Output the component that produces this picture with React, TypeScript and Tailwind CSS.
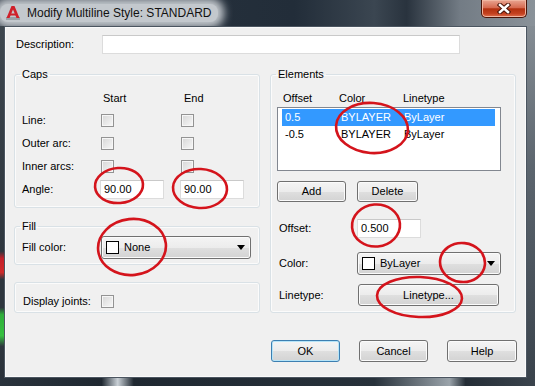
import React from "react";

// Windows 7 style "Modify Multiline Style" dialog with red annotation circles

const btnBg =
  "bg-[linear-gradient(#f4f4f4_0%,#ececec_50%,#dfdfdf_51%,#d3d3d3_100%)]";

const Checkbox = () => (
  <div className="size-[13px] border border-[#939393] bg-[linear-gradient(135deg,#d6d6d6,#f8f8f8)] shadow-[inset_0_0_0_1px_#f6f6f6]" />
);

const TextBox = ({ value, className }: { value?: string; className: string }) => (
  <div
    className={`${className} flex items-center border border-[#dcdcdc] border-t-[#c9c9c9] bg-white pl-[3px] leading-none`}
  >
    {value}
  </div>
);

const Button = ({
  label,
  className,
  focus,
}: {
  label: string;
  className: string;
  focus?: boolean;
}) => (
  <div
    className={`${className} ${btnBg} flex items-center justify-center rounded-[3px] border ${
      focus
        ? "border-[#3c7fb1] shadow-[inset_0_0_0_1px_#b6e4f8]"
        : "border-[#707070] shadow-[inset_0_0_0_1px_#fbfbfb]"
    }`}
  >
    {label}
  </div>
);

const ColorCombo = ({ label, className }: { label: string; className: string }) => (
  <div
    className={`${className} ${btnBg} flex items-center rounded-[3px] border border-[#707070] shadow-[inset_0_0_0_1px_#fbfbfb] pl-[4px] pr-[5px]`}
  >
    <div className="size-[13px] border border-black bg-white" />
    <span className="ml-[5px] flex-1">{label}</span>
    <svg width="8" height="5" viewBox="0 0 8 5">
      <path d="M0 0 H8 L4 5 Z" fill="#000" />
    </svg>
  </div>
);

const GroupBox = ({
  title,
  className,
  children,
}: {
  title: string;
  className?: string;
  children: React.ReactNode;
}) => (
  <fieldset className={`${className ?? ""} rounded-[3px] border border-[#d9e1e6] shadow-[inset_0_0_0_1px_#fbfbfb]`}>
    <legend className="ml-[5px] px-[2px] leading-[14px]">{title}</legend>
    {children}
  </fieldset>
);

const TitleBar = () => (
  <div className="flex h-[26px] items-start justify-between bg-[linear-gradient(90deg,#2a3440_0%,#222d39_55%,#3b4651_70%,#29333e_76%,#737c85_86%,#8a9299_100%)]">
    <div className="mt-[4px] flex h-[18px] items-center gap-[6px] rounded-[8px] bg-[#c3c8cd] pl-[5px] pr-[6px] shadow-[0_0_8px_6px_#c3c8cd]">
      <svg width="16" height="16" viewBox="0 0 16 16">
        <rect x="1" y="12" width="14" height="3" fill="#9aa0a6" />
        <path d="M1.5 13 L6.5 1 H9.5 L14.5 13 H11.5 L8 4.5 L4.5 13 Z" fill="#d0202a" />
        <rect x="5" y="8.5" width="6" height="2" fill="#d0202a" />
      </svg>
      <span className="text-[12px] text-[#111]">Modify Multiline Style: STANDARD</span>
    </div>
    <div className="mr-[8px] flex h-[18px] w-[46px] items-center justify-center rounded-b-[5px] border border-t-0 border-[#4a1408] bg-[linear-gradient(#e9a591_0%,#d66a50_45%,#b2300f_52%,#c4411f_80%,#e07050_100%)] shadow-[inset_0_0_0_1px_#f0b5a0]">
      <svg width="14" height="11" viewBox="0 0 14 11">
        <path d="M3 2 L11 9 M11 2 L3 9" stroke="#4a1408" strokeWidth="4.5" strokeLinecap="square" />
        <path d="M3 2 L11 9 M11 2 L3 9" stroke="#ffffff" strokeWidth="2.5" strokeLinecap="square" />
      </svg>
    </div>
  </div>
);

const Caps = () => {
  const rows = ["Line:", "Outer arc:", "Inner arcs:"];
  return (
    <GroupBox title="Caps">
      <div className="pl-[7px] pt-[6px] pb-[7px]">
        <div className="grid h-[22px] grid-cols-[78px_80px_79px] items-center">
          <span />
          <span className="ml-[3px]">Start</span>
          <span className="ml-[4px]">End</span>
        </div>
        {rows.map((r) => (
          <div key={r} className="grid h-[23px] grid-cols-[78px_80px_79px] items-center">
            <span>{r}</span>
            <div className="ml-[1px]">
              <Checkbox />
            </div>
            <div className="ml-[1px]">
              <Checkbox />
            </div>
          </div>
        ))}
        <div className="grid h-[22px] grid-cols-[78px_80px_79px] items-center">
          <span>Angle:</span>
          <TextBox value="90.00" className="h-[19px] w-[64px]" />
          <TextBox value="90.00" className="h-[19px] w-[64px]" />
        </div>
      </div>
    </GroupBox>
  );
};

const Elements = () => (
  <GroupBox title="Elements">
    <div className="pl-[6px] pb-[6px]">
      <div className="mt-[8px] flex h-[18px] items-center pl-[6px]">
        <span className="w-[56px]">Offset</span>
        <span className="w-[64px]">Color</span>
        <span>Linetype</span>
      </div>
      <div className="h-[64px] w-[224px] border border-[#828790] bg-white pt-[1px]">
        <div className="ml-[4px] mr-[5px] flex h-[17px] items-center bg-[#3399ff] pl-[3px] text-white">
          <span className="w-[56px]">0.5</span>
          <span className="w-[63px]">BYLAYER</span>
          <span>ByLayer</span>
        </div>
        <div className="ml-[4px] mr-[5px] flex h-[17px] items-center pl-[3px]">
          <span className="w-[56px]">-0.5</span>
          <span className="w-[63px]">BYLAYER</span>
          <span>ByLayer</span>
        </div>
      </div>
      <div className="mt-[10px] flex">
        <Button label="Add" className="h-[21px] w-[69px]" />
        <Button label="Delete" className="ml-[11px] h-[21px] w-[61px]" />
      </div>
      <div className="mt-[17px] flex h-[19px] items-center pl-[2px]">
        <span className="w-[78px]">Offset:</span>
        <TextBox value="0.500" className="h-[19px] w-[64px]" />
      </div>
      <div className="mt-[14px] flex h-[23px] items-center pl-[2px]">
        <span className="w-[78px]">Color:</span>
        <ColorCombo label="ByLayer" className="h-[23px] w-[144px]" />
      </div>
      <div className="mt-[9px] flex h-[22px] items-center pl-[2px]">
        <span className="w-[79px]">Linetype:</span>
        <Button label="Linetype..." className="h-[22px] w-[141px]" />
      </div>
    </div>
  </GroupBox>
);

const Annotations = () => (
  <svg
    className="pointer-events-none absolute left-0 top-0"
    width="535"
    height="386"
    viewBox="0 0 535 386"
    fill="none"
    stroke="#d4141c"
    strokeWidth="2.6"
  >
    <ellipse cx="119" cy="185.5" rx="24" ry="17.5" transform="rotate(-4 119 185.5)" />
    <ellipse cx="200" cy="188.5" rx="27" ry="19.5" transform="rotate(3 200 188.5)" />
    <ellipse cx="132" cy="247" rx="34" ry="28" transform="rotate(-6 132 247)" />
    <ellipse cx="372" cy="128" rx="36" ry="25" transform="rotate(4 372 128)" />
    <ellipse cx="376" cy="225.5" rx="24" ry="21" transform="rotate(-5 376 225.5)" />
    <ellipse cx="462.5" cy="262.5" rx="22.5" ry="19.5" transform="rotate(6 462.5 262.5)" />
    <ellipse cx="419.5" cy="297" rx="42.5" ry="20" transform="rotate(2 419.5 297)" />
  </svg>
);

export default function App() {
  return (
    <div className="relative h-[386px] w-[535px] overflow-hidden bg-[#2b343d] font-['Liberation_Sans',Arial,sans-serif] text-[11px] text-black">
      <TitleBar />
      <div className="flex h-[352px]">
        <div className="w-[4px] bg-[linear-gradient(#3d464e_0%,#2e363e_64%,#c4202a_66%,#d02a2a_70%,#2e363e_72%,#2e363e_80%,#2fae3a_82%,#36c040_88%,#2e363e_91%,#2a3139_100%)]" />
        <div className="w-[523px] border border-[#4b5560] bg-[#f0f0f0] shadow-[inset_0_0_0_1px_#fafafa] px-[9px] pt-[8px]">
          <div className="flex h-[19px] items-center pl-[2px]">
            <span className="w-[86px]">Description:</span>
            <TextBox className="h-[19px] w-[358px]" />
          </div>
          <div className="mt-[13px] grid grid-cols-[246px_246px] gap-x-[10px]">
            <div className="flex flex-col">
              <Caps />
              <GroupBox title="Fill" className="mt-[11px]">
                <div className="flex items-center pl-[7px] pt-[3px] pb-[5px]">
                  <span className="w-[79px]">Fill color:</span>
                  <ColorCombo label="None" className="h-[23px] w-[150px]" />
                </div>
              </GroupBox>
              <div className="mt-[17px] flex h-[31px] items-center rounded-[3px] border border-[#d9e1e6] pl-[8px] pt-[7px] shadow-[inset_0_0_0_1px_#fbfbfb]">
                <span className="w-[78px]">Display joints:</span>
                <Checkbox />
              </div>
            </div>
            <Elements />
          </div>
          <div className="mt-[27px] flex justify-end gap-[19px]">
            <Button label="OK" className="h-[22px] w-[69px]" focus />
            <Button label="Cancel" className="h-[22px] w-[69px]" />
            <Button label="Help" className="h-[22px] w-[70px]" />
          </div>
        </div>
        <div className="flex-1 bg-[linear-gradient(#858d94_0%,#5c656e_40%,#3a434c_100%)]" />
      </div>
      <div className="h-[8px] bg-[linear-gradient(90deg,#2a333c_0%,#1f2831_19%,#c9d0d6_22%,#1f2831_25%,#27313a_70%,#9aa3aa_84%,#242d36_87%,#3b444d_100%)]" />
      <Annotations />
    </div>
  );
}
